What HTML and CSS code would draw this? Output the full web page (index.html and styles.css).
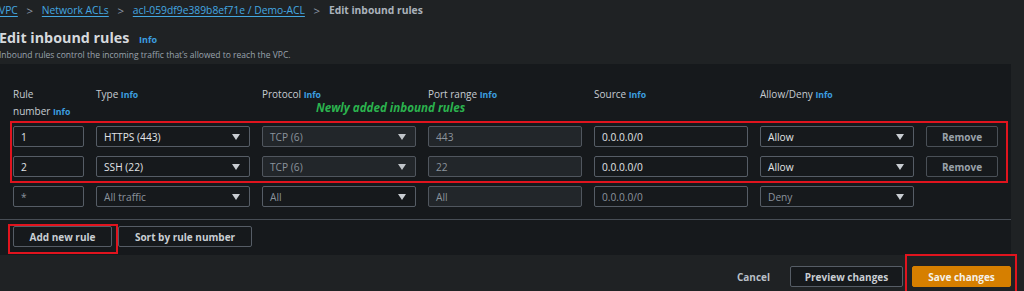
FILE: index.html
```html
<!DOCTYPE html>
<html>
<head>
<meta charset="utf-8">
<link rel="stylesheet" href="styles.css">
</head>
<body>
<nav class="crumbs">
  <a class="crumb">VPC</a><span class="sep">&gt;</span>
  <a class="crumb">Network ACLs</a><span class="sep">&gt;</span>
  <a class="crumb">acl-059df9e389b8ef71e / Demo-ACL</a><span class="sep">&gt;</span>
  <span class="current">Edit inbound rules</span>
</nav>
<header class="page-head">
  <h1 class="title">Edit inbound rules <span class="info">Info</span></h1>
  <p class="desc">Inbound rules control the incoming traffic that’s allowed to reach the VPC.</p>
</header>
<section class="panel">
  <div class="grid heads">
    <div class="h">Rule<br>number <span class="info">Info</span></div>
    <div class="h">Type <span class="info">Info</span></div>
    <div class="h">Protocol <span class="info">Info</span></div>
    <div class="h">Port range <span class="info">Info</span></div>
    <div class="h">Source <span class="info">Info</span></div>
    <div class="h">Allow/Deny <span class="info">Info</span></div>
    <div class="h"></div>
    <span class="note">Newly added inbound rules</span>
  </div>
  <div class="rows">
    <div class="grid row">
      <div class="field">1</div>
      <div class="field select">HTTPS (443)<i class="caret"></i></div>
      <div class="field select off">TCP (6)<i class="caret"></i></div>
      <div class="field off">443</div>
      <div class="field">0.0.0.0/0</div>
      <div class="field select">Allow<i class="caret"></i></div>
      <button class="btn remove">Remove</button>
    </div>
    <div class="grid row">
      <div class="field">2</div>
      <div class="field select">SSH (22)<i class="caret"></i></div>
      <div class="field select off">TCP (6)<i class="caret"></i></div>
      <div class="field off">22</div>
      <div class="field">0.0.0.0/0</div>
      <div class="field select">Allow<i class="caret"></i></div>
      <button class="btn remove">Remove</button>
    </div>
    <div class="grid row">
      <div class="field dim">*</div>
      <div class="field select dim">All traffic<i class="caret"></i></div>
      <div class="field select dim">All<i class="caret"></i></div>
      <div class="field off">All</div>
      <div class="field dim">0.0.0.0/0</div>
      <div class="field select dim">Deny<i class="caret"></i></div>
      <div></div>
    </div>
    <span class="mark mark-rows"></span>
  </div>
  <div class="actions">
    <button class="btn">Add new rule</button>
    <button class="btn">Sort by rule number</button>
    <span class="mark mark-add"></span>
  </div>
</section>
<footer class="foot">
  <button class="link-btn">Cancel</button>
  <button class="btn">Preview changes</button>
  <button class="btn primary">Save changes</button>
  <span class="mark mark-save"></span>
</footer>
</body>
</html>
```
FILE: styles.css
```css
* { box-sizing: border-box; }
html, body { margin: 0; padding: 0; }
body {
  background: #1f2224;
  font-family: "Open Sans", "Noto Sans", sans-serif;
  color: #d1d5db;
  width: 1024px;
  height: 291px;
  overflow: hidden;
  font-size: 10px;
}
.crumbs {
  display: flex;
  align-items: center;
  height: 20px;
  margin-left: -1px;
  font-size: 10.3px;
}
.crumb {
  flex: none;
  color: #44a7e0;
  text-decoration: underline;
  text-underline-offset: 2px;
}
.sep {
  flex: none;
  color: #8d99a8;
  width: 24px;
  text-align: center;
  font-size: 11.5px;
}
.current { flex: none; color: #aab2bb; font-weight: 700; font-size: 10.3px; }
.page-head { margin-left: -1px; padding-top: 9px; }
.title {
  margin: 0;
  font-size: 14.3px;
  font-weight: 700;
  line-height: 18px;
  color: #d5d9dd;
}
.title .info { margin-left: 6px; font-size: 9px; }
.info { color: #3c9fe0; font-weight: 700; font-size: 8.7px; }
.desc {
  margin: 0;
  font-size: 8.5px;
  line-height: 12px;
  color: #9aa3ad;
}
.panel {
  margin-top: 3px;
  width: 1011px;
  height: 191px;
  background: #16191c;
  padding: 22px 0 0 13px;
}
.grid {
  display: grid;
  grid-template-columns: 71px 154px 154px 154px 154px 154px 72px;
  column-gap: 12px;
}
.heads {
  position: relative;
  height: 40px;
  font-size: 10px;
  line-height: 17px;
  color: #c6ccd2;
}
.note {
  position: absolute;
  left: 303px;
  top: 13px;
  color: #2bb34e;
  font-style: italic;
  font-weight: 700;
  font-size: 11.6px;
  line-height: 17px;
}
.rows { position: relative; display: flex; flex-direction: column; gap: 9px; }
.row { height: 21px; }
.field {
  position: relative;
  display: flex;
  align-items: center;
  height: 21px;
  padding: 0 7px;
  border: 1px solid #565d66;
  border-radius: 2px;
  font-size: 10.2px;
  color: #e1e4e7;
  background: #16191c;
}
.field.off {
  background: #22262a;
  border-color: #50565e;
  color: #8b939c;
}
.field.dim { color: #8b939c; }
.caret {
  position: absolute;
  right: 9px;
  top: 7px;
  width: 0;
  height: 0;
  border-left: 4px solid transparent;
  border-right: 4px solid transparent;
  border-top: 6px solid #c9cdd2;
}
.off .caret { border-top-color: #c0c4c9; }
.btn {
  font-family: inherit;
  height: 21px;
  padding: 0 15px;
  border: 1px solid #565d66;
  border-radius: 2px;
  background: #16191c;
  color: #c9ced3;
  font-weight: 700;
  font-size: 10px;
}
.btn.remove { border-color: #4a5057; color: #9aa2aa; padding: 0; }
.actions {
  position: relative;
  display: flex;
  gap: 6px;
  margin: 12px 0 0 -13px;
  padding: 6px 0 0 13px;
  border-top: 1px solid #474d55;
  width: 1011px;
}
.actions .btn { height: 21px; }
.actions .btn:first-child { width: 99px; padding: 0; }
.actions .btn:nth-child(2) { width: 134px; padding: 0; }
.foot {
  position: relative;
  display: flex;
  justify-content: flex-end;
  align-items: center;
  gap: 9px;
  width: 1011px;
  padding-top: 11px;
}
.link-btn {
  font-family: inherit;
  background: none;
  border: 0;
  padding: 0;
  color: #b8bfc6;
  font-weight: 700;
  font-size: 10px;
  margin-right: 11px;
}
.foot .btn { height: 21px; width: 113px; padding: 0; background: #16191c; }
.foot .btn.primary {
  width: 99px;
  background: #d67f00;
  border-color: #d67f00;
  color: #f4f1ea;
}
.mark {
  position: absolute;
  border: 2px solid #e0141e;
  pointer-events: none;
}
.mark-rows { left: -3px; top: -5px; width: 998px; height: 62px; }
.mark-add { left: 8px; top: 4px; width: 110px; height: 30px; }
.mark-save { right: -6px; top: -1px; width: 112px; height: 40px; }
```
